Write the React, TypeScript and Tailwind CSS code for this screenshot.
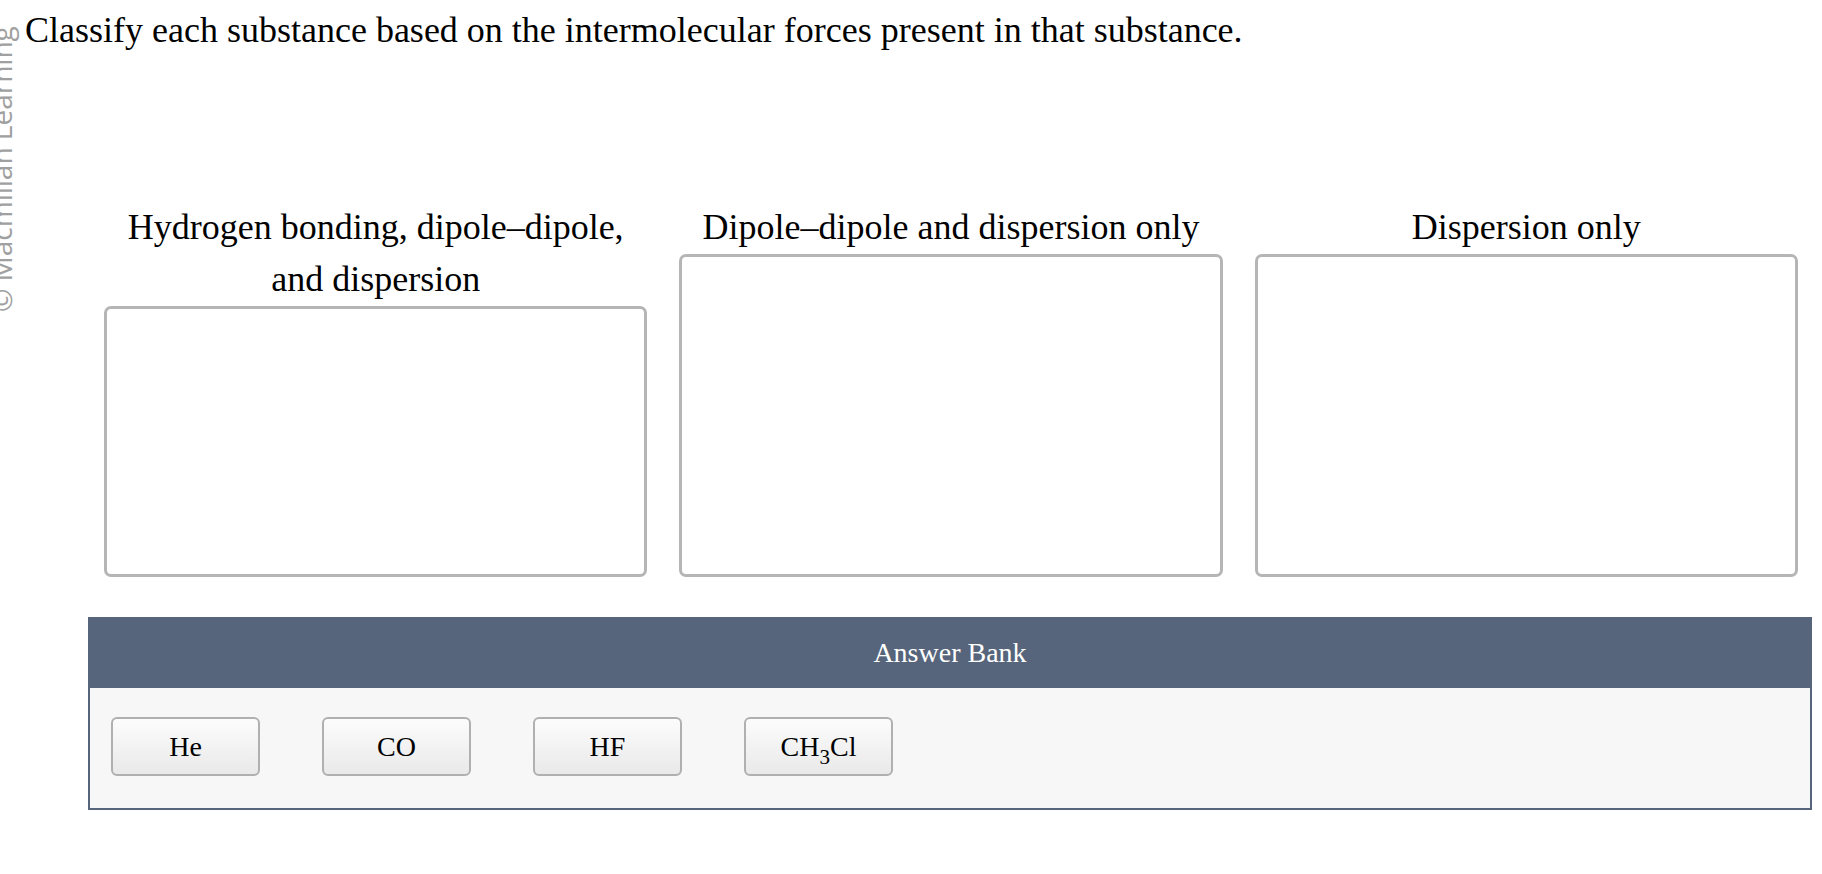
const SERIF = 'font-["Times_New_Roman","Liberation_Serif",Times,serif]'

const bins = [
  { label: 'Hydrogen bonding, dipole–dipole, and dispersion', lines: ['Hydrogen bonding, dipole–dipole,', 'and dispersion'] },
  { label: 'Dipole–dipole and dispersion only', lines: ['Dipole–dipole and dispersion only'] },
  { label: 'Dispersion only', lines: ['Dispersion only'] },
]

function Chip({ children }: { children: React.ReactNode }) {
  return (
    <div className="w-[149px] h-[59px] flex items-center justify-center rounded-[6px] border-2 border-[#b0b0b0] bg-gradient-to-b from-[#fcfcfc] to-[#e9e9e9] text-[28px] text-black">
      {children}
    </div>
  )
}

export default function App() {
  return (
    <div className={`relative w-[1822px] h-[874px] bg-white text-black overflow-hidden ${SERIF}`}>
      {/* watermark */}
      <div className="absolute left-[-13px] top-[312px] origin-top-left -rotate-90 whitespace-nowrap font-['Open_Sans',sans-serif] text-[28px] leading-none text-[#a0a0a0]">
        © Macmillan Learning
      </div>

      <div className="pl-[25px] pt-[10px]">
        <p className="text-[36px] leading-[40px]">
          Classify each substance based on the intermolecular forces present in that substance.
        </p>
      </div>

      <div className="mt-[151px] ml-[104px] w-[1694px] h-[376px] grid grid-cols-3 gap-x-[32px]">
        {bins.map((b) => (
          <div key={b.label} className="flex flex-col">
            <div className="text-center text-[36px] leading-[52px] mb-[1px]">
              {b.lines.map((l) => (
                <div key={l}>{l}</div>
              ))}
            </div>
            <div className="flex-1 rounded-[7px] border-[3px] border-[#b5b5b5] bg-white" />
          </div>
        ))}
      </div>

      <div className="mt-[40px] ml-[88px] w-[1724px]">
        <div className="h-[71px] bg-[#56657b] flex items-center justify-center text-white text-[28px]">
          Answer Bank
        </div>
        <div className="h-[122px] bg-[#f7f7f7] border-x-2 border-b-2 border-[#56657b] pl-[21px] pt-[29px] flex gap-[62px] items-start">
          <Chip>He</Chip>
          <Chip>CO</Chip>
          <Chip>HF</Chip>
          <Chip>
            CH<span className="text-[21px] relative top-[11px]">3</span>Cl
          </Chip>
        </div>
      </div>
    </div>
  )
}
